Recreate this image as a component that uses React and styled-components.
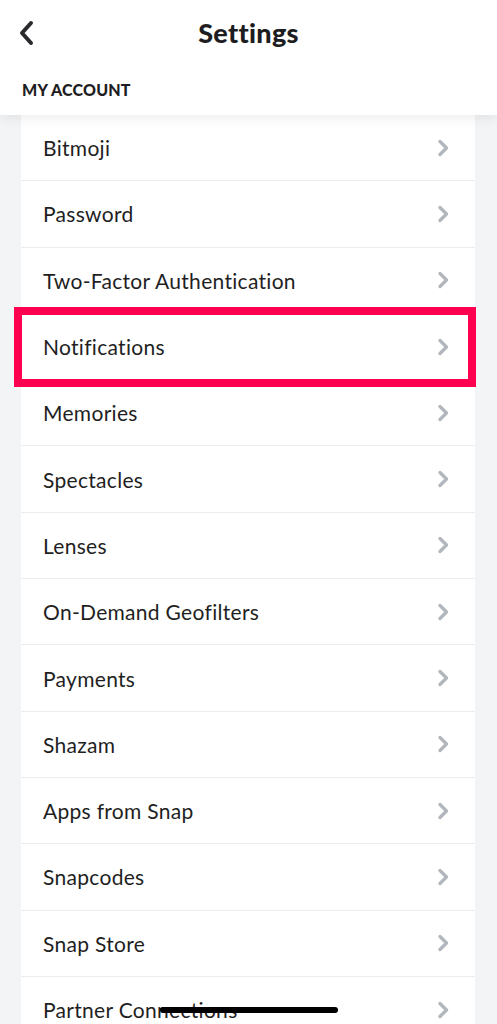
import React from "react";
import styled, { createGlobalStyle } from "styled-components";

const items = [
  "Bitmoji",
  "Password",
  "Two-Factor Authentication",
  "Notifications",
  "Memories",
  "Spectacles",
  "Lenses",
  "On-Demand Geofilters",
  "Payments",
  "Shazam",
  "Apps from Snap",
  "Snapcodes",
  "Snap Store",
  "Partner Connections",
];

const Chevron = ({ color = "#b2b7bd", size = 18, weight = 3.4 }) => (
  <svg width={size} height={size} viewBox="0 0 18 18">
    <path
      d="M6 2.5 L12.5 9 L6 15.5"
      fill="none"
      stroke={color}
      strokeWidth={weight}
      strokeLinecap="round"
      strokeLinejoin="round"
    />
  </svg>
);

export default function App() {
  return (
    <Page>
      <Global />
      <Header>
        <TopBar>
          <Back>
            <svg width="18" height="26" viewBox="0 0 18 26">
              <path
                d="M13 3 L4 13 L13 23"
                fill="none"
                stroke="#2a2a2e"
                strokeWidth="4"
                strokeLinecap="round"
                strokeLinejoin="round"
              />
            </svg>
          </Back>
          <Title>Settings</Title>
        </TopBar>
        <Section>MY ACCOUNT</Section>
      </Header>
      <Card>
        {items.map(label => (
          <Row key={label} highlighted={label === "Notifications"}>
            <Label>{label}</Label>
            <Chevron />
          </Row>
        ))}
      </Card>
      <HomeBar />
    </Page>
  );
}

const Global = createGlobalStyle`
  html, body {
    margin: 0;
    padding: 0;
    background: #f3f4f6;
  }
  body {
    font-family: Lato, "Open Sans", "Liberation Sans", sans-serif;
    -webkit-font-smoothing: antialiased;
  }
`;

const Page = styled.div`
  width: 497px;
  height: 1024px;
  overflow: hidden;
  background: #f3f4f6;
  position: relative;
`;

const Header = styled.div`
  background: #ffffff;
  height: 115px;
  box-shadow: 0 3px 12px rgba(0, 0, 0, 0.08);
  position: relative;
  z-index: 2;
  display: flex;
  flex-direction: column;
`;

const TopBar = styled.div`
  height: 64px;
  display: flex;
  align-items: center;
  justify-content: center;
  position: relative;
`;

const Back = styled.div`
  position: absolute;
  left: 18px;
  top: 20px;
  display: flex;
`;

const Title = styled.div`
  font-size: 27px;
  font-weight: 900;
  color: #1d1d21;
  letter-spacing: 0.3px;
`;

const Section = styled.div`
  padding-left: 22px;
  margin-top: 16px;
  font-size: 16px;
  font-weight: 900;
  color: #1d1d21;
  letter-spacing: 0.2px;
`;

const Card = styled.div`
  margin: 0 22px 0 21px;
  background: #ffffff;
  display: flex;
  flex-direction: column;
`;

const Row = styled.div`
  height: 65.3px;
  display: flex;
  align-items: center;
  justify-content: space-between;
  padding: 0 23px 0 22px;
  border-bottom: 1px solid #ececee;
  position: relative;

  ${p =>
    p.highlighted &&
    `
    &::after {
      content: "";
      position: absolute;
      left: -7px;
      right: -1px;
      top: -7px;
      bottom: -8px;
      border: 8px solid #ff0050;
      pointer-events: none;
    }
  `}
`;

const Label = styled.div`
  font-size: 21px;
  color: #1f1f23;
  letter-spacing: 0.3px;
`;

const HomeBar = styled.div`
  position: absolute;
  left: 160px;
  top: 1007px;
  width: 178px;
  height: 6px;
  border-radius: 3px;
  background: #000;
  z-index: 3;
`;
